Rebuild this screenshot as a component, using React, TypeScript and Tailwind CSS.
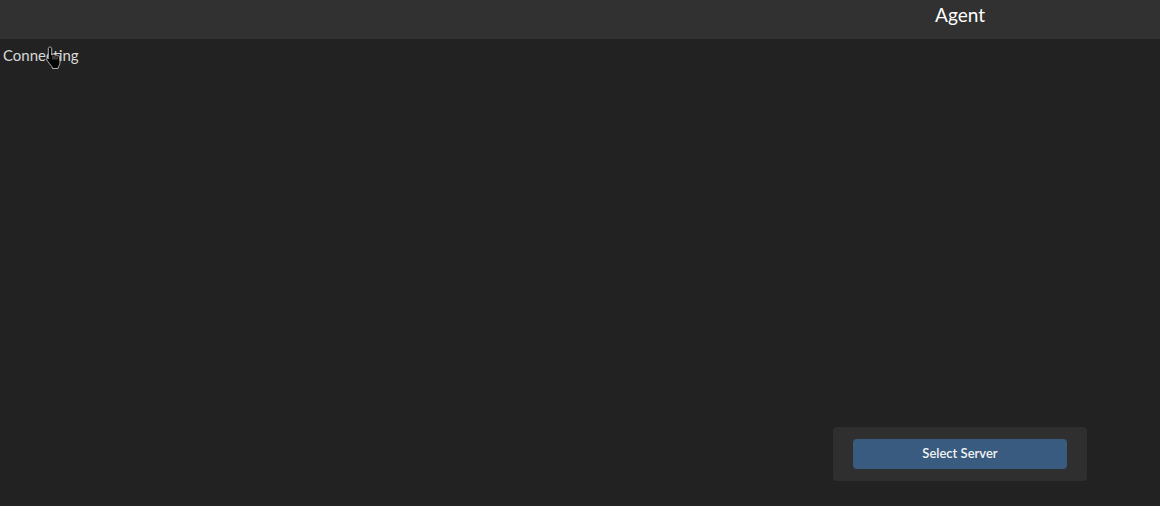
import React from "react";

// Mouse pointer caught in the screenshot
const HandCursor: React.FC = () => (
  <svg className="absolute left-[44px] top-[45px]" width="20" height="26" viewBox="0 0 20 26">
    <path
      d="M6 2c1 0 1.700.7 1.700 1.700V10l.8-.2c.8-.5 2-.4 2.400.4.800-.4 2-.2 2.300.6.900-.3 2.200.1 2.300 1.200l.5 5c.1 1.800-.8 3.500-1.500 4.800l-.5 1.700H8.500l-.7-2C6.500 20 4.500 17.500 2.800 15c-.8-1.200.8-2.700 2-1.500l-.5-.8V3.700C4.300 2.700 5 2 6 2z"
      fill="#050505"
      stroke="#d8d8d8"
      strokeWidth="0.8"
    />
    <path d="M9 11v3.500M11 11v3.500M13 11.500v3" stroke="#bdbdbd" strokeWidth="0.6" />
  </svg>
);

const App: React.FC = () => {
  return (
    <div className="relative flex flex-col h-[506px] w-full overflow-hidden bg-[#222222] font-['Lato','Noto_Sans',sans-serif]">
      <div className="flex justify-end h-[39px] shrink-0 bg-[#313131] pr-[73px]">
        <div className="w-[254px] pt-[3px] text-center text-[19px] leading-[24px] text-white">Agent</div>
      </div>
      <div className="flex flex-col flex-1 justify-between pb-[25px]">
        <div className="pl-[3px] pt-[5px] text-[15px] leading-[22px] text-[#d8d8d8]">Connecting</div>
        <div className="flex justify-end pr-[73px]">
          <div className="w-[254px] rounded bg-[#2f2f2f] px-5 py-3">
            <button className="block w-full h-[30px] rounded-sm bg-[#395b7f] text-[13px] font-semibold text-[#f2f2f2]">
              Select Server
            </button>
          </div>
        </div>
      </div>
      <HandCursor />
    </div>
  );
};

export default App;
